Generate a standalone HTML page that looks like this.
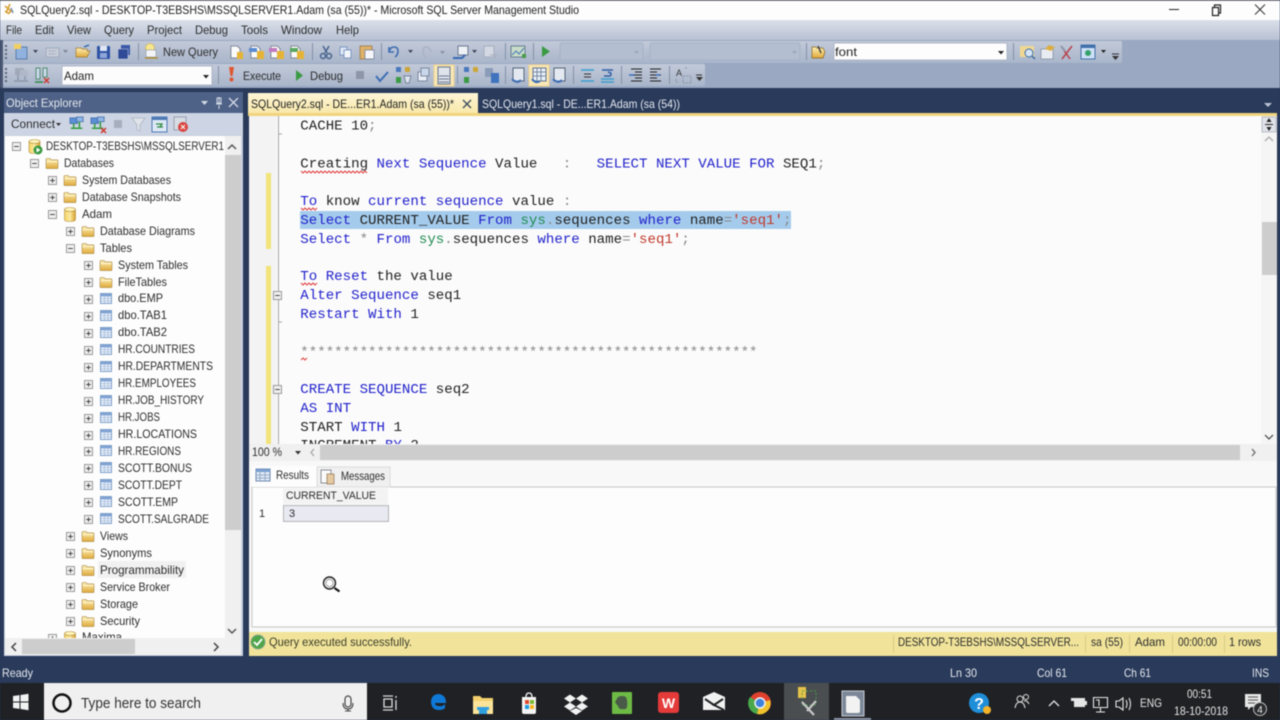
<!DOCTYPE html>
<html><head><meta charset="utf-8"><title>SSMS</title>
<style>
html,body{margin:0;padding:0;background:#293a5a;width:1280px;height:720px;overflow:hidden}
svg{display:block;filter:blur(.4px)}
text{font-family:"Liberation Sans",sans-serif;font-size:12px;fill:#2c2c2c}
.m{font-family:"Liberation Mono",monospace;font-size:14.117px;fill:#222;white-space:pre}
.b{fill:#2222cc}.g{fill:#888}.s{fill:#1f8a50}.r{fill:#c0392b}
.t{fill:#333}
.w{fill:#e6e9f0}
.sq{fill:none;stroke:#e04040;stroke-width:1}
</style></head><body>
<svg width="1280" height="720" viewBox="0 0 1280 720" xmlns="http://www.w3.org/2000/svg">
<defs>
<linearGradient id="mb" x1="0" y1="0" x2="0" y2="1"><stop offset="0" stop-color="#dbe0ea"/><stop offset="1" stop-color="#b7c1d3"/></linearGradient>
<linearGradient id="fo" x1="0" y1="0" x2="0" y2="1"><stop offset="0" stop-color="#fdf0b5"/><stop offset="1" stop-color="#e0a93a"/></linearGradient>
<linearGradient id="cy" x1="0" y1="0" x2="1" y2="0"><stop offset="0" stop-color="#f6d565"/><stop offset=".5" stop-color="#fbe9a0"/><stop offset="1" stop-color="#d9a02c"/></linearGradient>
<linearGradient id="tb" x1="0" y1="0" x2="0" y2="1"><stop offset="0" stop-color="#c2cad9"/><stop offset="1" stop-color="#a9b5ca"/></linearGradient>
<linearGradient id="at" x1="0" y1="0" x2="0" y2="1"><stop offset="0" stop-color="#fdf5d6"/><stop offset="1" stop-color="#f8e7a6"/></linearGradient>
<symbol id="folder" viewBox="0 0 14 12"><path d="M.5 2.5V1.4Q.5.6 1.4.6H5l1 1.4h6.6q.9 0 .9.9v8q0 .6-.7.6H1.2q-.7 0-.7-.6z" fill="url(#fo)" stroke="#a98a4a" stroke-width=".7"/><path d="M1 4h12" stroke="#fff8d8" stroke-width="1"/></symbol>
<symbol id="table" viewBox="0 0 12 11"><rect x=".5" y=".5" width="11" height="10" fill="#e9f0fa" stroke="#7f9fc9"/><rect x="1" y="1" width="10" height="2.4" fill="#7fa3d4"/><path d="M1 5.5h10M1 8h10M4.5 3.4V10M8 3.4V10" stroke="#a8bedc" stroke-width=".8"/></symbol>
<symbol id="plus" viewBox="0 0 9 9"><rect x=".5" y=".5" width="8" height="8" fill="#f0f0f0" stroke="#9a9a9a"/><path d="M2.2 4.5h4.6M4.5 2.2v4.6" stroke="#444"/></symbol>
<symbol id="minus" viewBox="0 0 9 9"><rect x=".5" y=".5" width="8" height="8" fill="#f0f0f0" stroke="#9a9a9a"/><path d="M2.2 4.5h4.6" stroke="#444"/></symbol>
<symbol id="cyl" viewBox="0 0 12 15"><path d="M.5 2.5v10q0 2 5.5 2t5.5-2v-10" fill="url(#cy)" stroke="#b08a3a" stroke-width=".6"/><ellipse cx="6" cy="2.5" rx="5.5" ry="2" fill="#fff3b8" stroke="#b08a3a" stroke-width=".6"/></symbol>
<symbol id="page" viewBox="0 0 12 14"><path d="M1 .5h7l3 3v10H1z" fill="#fafafa" stroke="#7a8090"/></symbol>
<symbol id="net" viewBox="0 0 18 18"><rect x="1" y="2" width="8" height="6" fill="#5d8fd6" stroke="#36629f" stroke-width=".7"/><rect x="8" y="1" width="7" height="5" fill="#90b6e8" stroke="#36629f" stroke-width=".7"/><path d="M5 8v4M11 6v6M2 13h12" stroke="#2f9d3f" stroke-width="1.6" fill="none"/></symbol>
</defs>

<!-- base -->
<rect width="1280" height="720" fill="#293a5a"/>
<!-- title bar -->
<rect width="1280" height="20" fill="#fdfdfd"/>
<rect width="1280" height="1" fill="#8f8f8f"/>
<path d="M5 6l6 5-3 3M10 4l-4 9M8 13l-3-2" stroke="#d8a23a" stroke-width="1.6" fill="none"/><path d="M11 8l2 5" stroke="#7a8aa8" stroke-width="1.5"/>
<text x="20" y="14" textLength="559" lengthAdjust="spacingAndGlyphs" style="fill:#222">SQLQuery2.sql - DESKTOP-T3EBSHS\MSSQLSERVER1.Adam (sa (55))* - Microsoft SQL Server Management Studio</text>
<path d="M1169 9.5h10" stroke="#222" stroke-width="1"/>
<path d="M1212.500 7.500h6v8h-6zM1214.500 7.500v-2.500h6v8h-2" fill="none" stroke="#222" stroke-width="1.200"/>
<path d="M1255 4.500l10 10M1265 4.500l-10 10" stroke="#333" stroke-width="1"/>

<!-- menu -->
<rect y="20" width="1280" height="20" fill="url(#mb)"/>
<g class="t">
<text x="6" y="34" textLength="16" lengthAdjust="spacingAndGlyphs">File</text>
<text x="35" y="34" textLength="19" lengthAdjust="spacingAndGlyphs">Edit</text>
<text x="67" y="34" textLength="24" lengthAdjust="spacingAndGlyphs">View</text>
<text x="104" y="34" textLength="30" lengthAdjust="spacingAndGlyphs">Query</text>
<text x="147" y="34" textLength="35" lengthAdjust="spacingAndGlyphs">Project</text>
<text x="195" y="34" textLength="33" lengthAdjust="spacingAndGlyphs">Debug</text>
<text x="241" y="34" textLength="27" lengthAdjust="spacingAndGlyphs">Tools</text>
<text x="281" y="34" textLength="41" lengthAdjust="spacingAndGlyphs">Window</text>
<text x="336" y="34" textLength="23" lengthAdjust="spacingAndGlyphs">Help</text>
</g>

<!-- toolbars -->
<rect y="40" width="1280" height="48" fill="#9aa8c1"/>
<rect x="0" y="40" width="3" height="48" fill="#4b5873"/>
<rect x="3" y="41" width="1119" height="22" fill="url(#tb)" rx="2"/>
<rect x="3" y="64" width="702" height="22" fill="url(#tb)" rx="2"/>
<g fill="#5a6478"><rect x="5" y="45" width="2" height="2"/><rect x="5" y="49" width="2" height="2"/><rect x="5" y="53" width="2" height="2"/><rect x="5" y="57" width="2" height="2"/><rect x="5" y="68" width="2" height="2"/><rect x="5" y="72" width="2" height="2"/><rect x="5" y="76" width="2" height="2"/><rect x="5" y="80" width="2" height="2"/></g>

<!-- toolbar 1 icons -->
<rect x="16" y="47" width="11" height="12" fill="#8fb2df" stroke="#4d6f9f" stroke-width=".8"/><rect x="14" y="44" width="7" height="5" fill="#f3cf61"/>
<path d="M33 50l5 0-2.500 3z" fill="#3c4658"/>
<rect x="46" y="48" width="13" height="9" fill="#c8ced9" stroke="#a3abbb"/><path d="M49 51h7M49 54h7" stroke="#98a1b2" stroke-dasharray="2 1"/>
<path d="M63 50l5 0-2.500 3z" fill="#7c8596"/>
<path d="M76 57V48h5l1 1h5v2h3l-3 6z" fill="url(#fo)" stroke="#a27a30" stroke-width=".7"/><path d="M84 47l5-2" stroke="#3f71b0" stroke-width="1.500"/>
<rect x="97" y="46" width="13" height="13" rx="1" fill="#2f52a5"/><rect x="100" y="46" width="7" height="5" fill="#dfe7f5"/><rect x="100" y="53" width="7" height="5" fill="#8ea6d8"/>
<rect x="121" y="45" width="9" height="10" fill="#3a59a8"/><rect x="118" y="49" width="10" height="10" fill="#2f4a96" stroke="#c9d3e8" stroke-width=".5"/>
<rect x="138" y="43" width="1" height="17" fill="#8190a8"/>
<circle cx="150" cy="48" r="4.500" fill="#f7e690" stroke="#c8a53a" stroke-width=".6"/><rect x="146" y="50" width="10" height="7" fill="#f2f4f7" stroke="#8a93a5" stroke-width=".6"/><path d="M145 58h13" stroke="#b38a1e" stroke-width="1.300"/>
<text x="163" y="56" textLength="55" lengthAdjust="spacingAndGlyphs">New Query</text>
<use href="#page" x="230" y="45" width="11" height="14"/><rect x="237" y="52" width="6" height="7" fill="#e5b437"/>
<use href="#page" x="250" y="45" width="11" height="14"/><rect x="249" y="48" width="8" height="4" fill="#5a8bd0"/><rect x="257" y="51" width="7" height="8" fill="#e5b437"/>
<use href="#page" x="270" y="45" width="11" height="14"/><rect x="269" y="48" width="8" height="4" fill="#c27ac0"/><rect x="277" y="51" width="7" height="8" fill="#e5b437"/>
<use href="#page" x="290" y="45" width="11" height="14"/><rect x="290" y="48" width="8" height="4" fill="#5aa860"/><rect x="297" y="51" width="7" height="8" fill="#e5b437"/>
<rect x="312" y="43" width="1" height="17" fill="#8190a8"/>
<path d="M323 46l4 7M329 46l-4 7" stroke="#48638f" stroke-width="1.500"/><circle cx="323" cy="56" r="2.500" fill="none" stroke="#48638f" stroke-width="1.500"/><circle cx="329" cy="56" r="2.500" fill="none" stroke="#48638f" stroke-width="1.500"/>
<rect x="340" y="47" width="7" height="8" fill="#dfe7f5" stroke="#5d7fb5" stroke-width=".7"/><rect x="344" y="50" width="7" height="8" fill="#f2f5fa" stroke="#5d7fb5" stroke-width=".7"/>
<rect x="360" y="46" width="12" height="13" fill="#dcb169" stroke="#98703a" stroke-width=".7"/><rect x="365" y="50" width="9" height="9" fill="#f5f6fa" stroke="#6a7890" stroke-width=".7"/>
<rect x="381" y="43" width="1" height="17" fill="#8190a8"/>
<path d="M389 52q1-5 5-5 4 0 4 4t-3 6M389 47v5h5" fill="none" stroke="#3e6db2" stroke-width="1.600"/>
<path d="M408 50l5 0-2.500 3z" fill="#3c4658"/>
<path d="M431 52q-1-5-5-5-3 0-3 4t3 6" fill="none" stroke="#aab3c4" stroke-width="1.500"/>
<path d="M440 51l5 0-2.500 3z" fill="#8a93a5"/>
<rect x="458" y="46" width="10" height="9" fill="#eef1f6" stroke="#6a7890"/><path d="M453 58h9l3-3" stroke="#3868b5" stroke-width="2" fill="none"/>
<path d="M472 50l5 0-2.500 3z" fill="#3c4658"/>
<rect x="484" y="46" width="10" height="11" fill="#d3d8e2" stroke="#a7afbf"/><path d="M490 55l6 0-2 3" stroke="#a7afbf" fill="none"/>
<rect x="505" y="43" width="1" height="17" fill="#8190a8"/>
<rect x="511" y="46" width="14" height="11" fill="#c8dcc8" stroke="#667f93"/><path d="M512 55l4-4 3 3 5-6" stroke="#4b7ab8" fill="none"/><rect x="522" y="54" width="4" height="4" fill="#4a9a4a"/>
<rect x="533" y="43" width="1" height="17" fill="#8190a8"/>
<path d="M542 46l8 5.500-8 5.500z" fill="#3a9a42"/>
<rect x="560" y="43" width="83" height="17" rx="2" fill="#b3bed1" stroke="#a6b2c7"/>
<path d="M634 51h5l-2.500 3z" fill="#9ba6b9"/>
<rect x="650" y="43" width="150" height="17" rx="2" fill="#b3bed1" stroke="#a6b2c7"/>
<path d="M792 51h5l-2.500 3z" fill="#9ba6b9"/>
<rect x="806" y="43" width="1" height="17" fill="#8190a8"/>
<path d="M812 58V47h4l1 1h6l2 4-2 6z" fill="url(#fo)" stroke="#8a6520" stroke-width=".7"/><path d="M818 46l3 7" stroke="#333" stroke-width="1.300"/>
<rect x="834" y="43" width="173" height="17" fill="#fdfdfd" stroke="#aeb6c6"/>
<text x="835" y="56" textLength="22" lengthAdjust="spacingAndGlyphs" style="fill:#222">font</text>
<path d="M998 51h6l-3 3.500z" fill="#222"/>
<rect x="1013" y="43" width="1" height="17" fill="#8190a8"/>
<rect x="1020" y="46" width="14" height="11" fill="#f0d893"/><circle cx="1029" cy="53" r="4" fill="#d5e5f7" stroke="#3a6ca8"/><path d="M1032 56l3 3" stroke="#3a6ca8" stroke-width="1.500"/>
<rect x="1041" y="49" width="12" height="10" fill="#e9edf3" stroke="#7d879b" stroke-width=".7"/><path d="M1045 49l4-4 6 2-4 4z" fill="#dcae42"/>
<path d="M1061 46l9 13M1072 46l-10 13" stroke="#b9414a" stroke-width="1.500"/><path d="M1061 46l4 5" stroke="#8d99ad" stroke-width="2"/>
<rect x="1081" y="45" width="14" height="14" fill="#cde0f5" stroke="#4171ad"/><rect x="1081" y="45" width="14" height="3" fill="#4171ad"/><circle cx="1088" cy="53" r="3" fill="#35a06b"/>
<path d="M1101 50h5l-2.500 3z" fill="#222"/>
<path d="M1112 54h7" stroke="#333"/><path d="M1112 56h7l-3.500 4z" fill="#333"/>

<!-- toolbar 2 icons -->
<g opacity=".55"><rect x="15" y="68" width="9" height="7" fill="#8b95a5"/><rect x="20" y="70" width="8" height="6" fill="#aab2c0"/><path d="M18 75v5M25 76v4M14 81h14" stroke="#6f7a8c" stroke-width="1.500"/></g>
<rect x="36" y="68" width="4" height="11" fill="#c9d7ec" stroke="#3a7e55" stroke-width=".8"/><rect x="43" y="68" width="4" height="9" fill="#c9d7ec" stroke="#3a7e55" stroke-width=".8"/><path d="M35 82h8" stroke="#2f8a46" stroke-width="1.500"/><path d="M44 78l5 5M49 78l-5 5" stroke="#cc3a30" stroke-width="1.500"/>
<rect x="62" y="66" width="150" height="19" fill="#fcfcfc" stroke="#aeb6c6"/>
<text x="64" y="80" textLength="30" lengthAdjust="spacingAndGlyphs" style="fill:#222">Adam</text>
<path d="M203 75h6l-3 3.500z" fill="#222"/>
<rect x="218" y="66" width="1" height="18" fill="#8190a8"/>
<path d="M229 67h5l-1.500 9h-2z" fill="#e0562f"/><circle cx="231.500" cy="79.500" r="2" fill="#e0562f"/>
<text x="243" y="80" textLength="38" lengthAdjust="spacingAndGlyphs">Execute</text>
<path d="M296 70l7 5.500-7 5.500z" fill="#3a9a42"/>
<text x="310" y="80" textLength="33" lengthAdjust="spacingAndGlyphs">Debug</text>
<rect x="356" y="71" width="8" height="8" fill="#8d96a8"/>
<path d="M376 76l4 5 8-9" fill="none" stroke="#3d6fb5" stroke-width="2"/>
<rect x="396" y="67" width="5" height="5" fill="#4a78bd"/><rect x="405" y="67" width="5" height="5" fill="#cda63a"/><rect x="396" y="77" width="5" height="6" fill="#3c9a45"/><path d="M404 76h7l-2 7h-3z" fill="#dfe5ef" stroke="#5c6a80" stroke-width=".7"/>
<rect x="418" y="72" width="9" height="9" fill="#e8ecf3" stroke="#7a88a0"/><rect x="421" y="68" width="8" height="8" fill="#cad7ea" stroke="#7a88a0"/>
<rect x="434" y="65" width="20" height="21" fill="#f8e8b8" stroke="#eed28c"/><rect x="438" y="67" width="12" height="17" fill="#dee3ec" stroke="#667389"/><path d="M439 76h10M439 79h10M439 82h10" stroke="#6d7a8f"/>
<rect x="457" y="66" width="1" height="18" fill="#8190a8"/>
<rect x="464" y="67" width="5" height="5" fill="#4a78bd"/><rect x="473" y="67" width="5" height="5" fill="#cda63a"/><rect x="464" y="77" width="5" height="6" fill="#3c9a45"/>
<rect x="485" y="68" width="8" height="9" fill="#8a9cb8"/><rect x="491" y="73" width="8" height="10" fill="#3f73bd"/>
<rect x="505" y="66" width="1" height="18" fill="#8190a8"/>
<rect x="513" y="68" width="11" height="13" fill="#e4e9f1" stroke="#536178"/><path d="M512 79q5 5 9 1" stroke="#3d6fb5" stroke-width="2" fill="none"/>
<rect x="529" y="65" width="20" height="21" fill="#f8e8b8" stroke="#eed28c"/><rect x="533" y="68" width="13" height="13" fill="#e8f0f8" stroke="#637089"/><path d="M533 72h13M533 76h13M537 68v13M541 68v13" stroke="#7888a3"/><path d="M532 79q4 5 8 2" stroke="#3d6fb5" stroke-width="2" fill="none"/>
<rect x="554" y="68" width="11" height="13" fill="#e4e9f1" stroke="#536178"/><path d="M553 79q5 5 9 1" stroke="#3d6fb5" stroke-width="2" fill="none"/>
<rect x="573" y="66" width="1" height="18" fill="#8190a8"/>
<path d="M581 70h13" stroke="#3a9ed0" stroke-width="1.500"/><path d="M584 74h7M584 77h7" stroke="#333"/><path d="M581 81h13" stroke="#3a9ed0" stroke-width="1.500"/>
<path d="M602 70h11" stroke="#2f5fa8" stroke-width="1.500"/><path d="M608 72q5 1 2 4h-6" stroke="#2f5fa8" stroke-width="1.500" fill="none"/><path d="M601 79h13M601 82h13" stroke="#3a9ed0" stroke-width="1.500"/>
<rect x="621" y="66" width="1" height="18" fill="#8190a8"/>
<path d="M631 69h11M635 72h7M631 75h11M635 78h7M631 81h11" stroke="#222"/><path d="M629 75h5" stroke="#3a6fc0" stroke-width="1.500"/>
<path d="M650 69h11M650 72h7M650 75h11M650 78h7M650 81h11" stroke="#222"/><path d="M660 75h-4" stroke="#3a6fc0" stroke-width="1.500"/>
<rect x="669" y="66" width="1" height="18" fill="#8190a8"/>
<text x="676" y="76" style="font-size:9px;fill:#333">A</text>
<path d="M685 68l3 0M676 79v3h3M683 76h8v7h-8z" stroke="#7f8a9d" fill="none" stroke-width=".8" stroke-dasharray="2 1"/>
<path d="M696 75h6" stroke="#333"/><path d="M696 77h7l-3.500 4z" fill="#333"/>

<!-- Tab strip -->
<rect x="0" y="88" width="1280" height="28" fill="#293a5a"/>
<rect x="248" y="93" width="230" height="22" fill="url(#at)"/>
<text x="251" y="108" textLength="203" lengthAdjust="spacingAndGlyphs" style="fill:#222">SQLQuery2.sql - DE...ER1.Adam (sa (55))*</text>
<path d="M463 100l8 8M471 100l-8 8" stroke="#3a4a5e" stroke-width="1.300"/>
<text x="482" y="108" textLength="198" lengthAdjust="spacingAndGlyphs" class="w">SQLQuery1.sql - DE...ER1.Adam (sa (54))</text>
<path d="M1264 103h8l-4 4z" fill="#b9c3d4"/>
<rect x="248" y="113" width="1029" height="3" fill="#f1d47e"/>

<!-- Object Explorer -->
<rect x="4" y="92" width="239" height="21" fill="#4e6186"/>
<text x="6" y="107" textLength="76" lengthAdjust="spacingAndGlyphs" class="w">Object Explorer</text>
<path d="M201 101h7l-3.500 4z" fill="#d3d9e5"/>
<path d="M219 97v7m-3 0h6M217 98h4v5h-4zM219 105v4" stroke="#d3d9e5" fill="none"/>
<path d="M229 98l9 9M238 98l-9 9" stroke="#d3d9e5" stroke-width="1.300"/>
<rect x="4" y="113" width="239" height="22" fill="#cdd4e3"/>
<text x="11" y="128" textLength="44" lengthAdjust="spacingAndGlyphs">Connect</text>
<path d="M56 123h5l-2.500 3z" fill="#333"/>
<use href="#net" x="69" y="116" width="17" height="17"/>
<use href="#net" x="90" y="116" width="17" height="17"/>
<path d="M101 128l5 5M106 128l-5 5" stroke="#d03a30" stroke-width="1.500"/>
<rect x="114" y="120" width="8" height="8" fill="#a7afbd"/>
<path d="M132 118h13l-5 7v6l-3-1v-5z" fill="#dfe3ea" stroke="#aeb5c2" stroke-width=".8"/>
<rect x="152" y="117" width="15" height="15" fill="#dce8f6" stroke="#4d7ab5"/><rect x="152" y="117" width="15" height="3" fill="#4d7ab5"/><path d="M156 124h6l-2 3M163 127h-6" stroke="#2f8a3c" stroke-width="1.300" fill="none"/>
<rect x="174" y="117" width="12" height="13" fill="#d7dbe3" stroke="#97a0af"/><circle cx="183" cy="127" r="5" fill="#d9453f"/><path d="M181 125l4 4M185 125l-4 4" stroke="#fff"/>

<!-- tree -->
<rect x="4" y="135" width="239" height="521" fill="#c9d1e0"/>
<rect x="5" y="136" width="236" height="519" fill="#fdfdfd"/>
<rect x="225" y="136" width="16" height="502" fill="#f0f0f0"/>
<rect x="225" y="155" width="16" height="375" fill="#cdcdcd"/>
<path d="M228 149l4-4 4 4" stroke="#555" stroke-width="1.500" fill="none"/>
<path d="M228 633l4-0 0 0" stroke="none" fill="none"/>
<path d="M228 629l4 4 4-4" stroke="#555" stroke-width="1.500" fill="none"/>

<use href="#minus" x="12" y="142" width="9" height="9"/>
<use href="#cyl" x="28" y="139" width="13" height="15"/><circle cx="38" cy="150" r="4.500" fill="#3a9a42"/><path d="M36.500 147.500l4 2.500-4 2.500z" fill="#fff"/>
<text x="46" y="150" textLength="178" lengthAdjust="spacingAndGlyphs">DESKTOP-T3EBSHS\MSSQLSERVER1</text>
<use href="#minus" x="30" y="159" width="9" height="9"/><use href="#folder" x="45" y="158" width="14" height="11"/>
<text x="64" y="167" textLength="50" lengthAdjust="spacingAndGlyphs">Databases</text>
<use href="#plus" x="48" y="176" width="9" height="9"/><use href="#folder" x="63" y="175" width="14" height="11"/>
<text x="82" y="184" textLength="89" lengthAdjust="spacingAndGlyphs">System Databases</text>
<use href="#plus" x="48" y="193" width="9" height="9"/><use href="#folder" x="63" y="192" width="14" height="11"/>
<text x="82" y="201" textLength="99" lengthAdjust="spacingAndGlyphs">Database Snapshots</text>
<use href="#minus" x="48" y="210" width="9" height="9"/><use href="#cyl" x="64" y="207" width="12" height="15"/>
<text x="82" y="218" textLength="30" lengthAdjust="spacingAndGlyphs">Adam</text>
<use href="#plus" x="66" y="227" width="9" height="9"/><use href="#folder" x="81" y="226" width="14" height="11"/>
<text x="100" y="235" textLength="95" lengthAdjust="spacingAndGlyphs">Database Diagrams</text>
<use href="#minus" x="66" y="244" width="9" height="9"/><use href="#folder" x="81" y="243" width="14" height="11"/>
<text x="100" y="252" textLength="32" lengthAdjust="spacingAndGlyphs">Tables</text>
<use href="#plus" x="84" y="261" width="9" height="9"/><use href="#folder" x="99" y="260" width="14" height="11"/>
<text x="118" y="269" textLength="70" lengthAdjust="spacingAndGlyphs">System Tables</text>
<use href="#plus" x="84" y="278" width="9" height="9"/><use href="#folder" x="99" y="277" width="14" height="11"/>
<text x="118" y="286" textLength="49" lengthAdjust="spacingAndGlyphs">FileTables</text>

<use href="#plus" x="84" y="295" width="9" height="9"/><use href="#table" x="100" y="293" width="12" height="11"/><text x="118" y="302" textLength="45" lengthAdjust="spacingAndGlyphs">dbo.EMP</text>
<use href="#plus" x="84" y="312" width="9" height="9"/><use href="#table" x="100" y="310" width="12" height="11"/><text x="118" y="319" textLength="49" lengthAdjust="spacingAndGlyphs">dbo.TAB1</text>
<use href="#plus" x="84" y="329" width="9" height="9"/><use href="#table" x="100" y="327" width="12" height="11"/><text x="118" y="336" textLength="49" lengthAdjust="spacingAndGlyphs">dbo.TAB2</text>
<use href="#plus" x="84" y="346" width="9" height="9"/><use href="#table" x="100" y="344" width="12" height="11"/><text x="118" y="353" textLength="77" lengthAdjust="spacingAndGlyphs">HR.COUNTRIES</text>
<use href="#plus" x="84" y="363" width="9" height="9"/><use href="#table" x="100" y="361" width="12" height="11"/><text x="118" y="370" textLength="95" lengthAdjust="spacingAndGlyphs">HR.DEPARTMENTS</text>
<use href="#plus" x="84" y="380" width="9" height="9"/><use href="#table" x="100" y="378" width="12" height="11"/><text x="118" y="387" textLength="78" lengthAdjust="spacingAndGlyphs">HR.EMPLOYEES</text>
<use href="#plus" x="84" y="397" width="9" height="9"/><use href="#table" x="100" y="395" width="12" height="11"/><text x="118" y="404" textLength="86" lengthAdjust="spacingAndGlyphs">HR.JOB_HISTORY</text>
<use href="#plus" x="84" y="414" width="9" height="9"/><use href="#table" x="100" y="412" width="12" height="11"/><text x="118" y="421" textLength="42" lengthAdjust="spacingAndGlyphs">HR.JOBS</text>
<use href="#plus" x="84" y="431" width="9" height="9"/><use href="#table" x="100" y="429" width="12" height="11"/><text x="118" y="438" textLength="79" lengthAdjust="spacingAndGlyphs">HR.LOCATIONS</text>
<use href="#plus" x="84" y="447" width="9" height="9"/><use href="#table" x="100" y="445" width="12" height="11"/><text x="118" y="455" textLength="63" lengthAdjust="spacingAndGlyphs">HR.REGIONS</text>
<use href="#plus" x="84" y="464" width="9" height="9"/><use href="#table" x="100" y="462" width="12" height="11"/><text x="118" y="472" textLength="74" lengthAdjust="spacingAndGlyphs">SCOTT.BONUS</text>
<use href="#plus" x="84" y="481" width="9" height="9"/><use href="#table" x="100" y="479" width="12" height="11"/><text x="118" y="489" textLength="64" lengthAdjust="spacingAndGlyphs">SCOTT.DEPT</text>
<use href="#plus" x="84" y="498" width="9" height="9"/><use href="#table" x="100" y="496" width="12" height="11"/><text x="118" y="506" textLength="60" lengthAdjust="spacingAndGlyphs">SCOTT.EMP</text>
<use href="#plus" x="84" y="515" width="9" height="9"/><use href="#table" x="100" y="513" width="12" height="11"/><text x="118" y="523" textLength="91" lengthAdjust="spacingAndGlyphs">SCOTT.SALGRADE</text>

<use href="#plus" x="66" y="532" width="9" height="9"/><use href="#folder" x="81" y="531" width="14" height="11"/><text x="100" y="540" textLength="28" lengthAdjust="spacingAndGlyphs">Views</text>
<use href="#plus" x="66" y="549" width="9" height="9"/><use href="#folder" x="81" y="548" width="14" height="11"/><text x="100" y="557" textLength="52" lengthAdjust="spacingAndGlyphs">Synonyms</text>
<rect x="98" y="561" width="88" height="17" fill="#f1f1f1"/>
<use href="#plus" x="66" y="566" width="9" height="9"/><use href="#folder" x="81" y="565" width="14" height="11"/><text x="100" y="574" textLength="84" lengthAdjust="spacingAndGlyphs">Programmability</text>
<use href="#plus" x="66" y="583" width="9" height="9"/><use href="#folder" x="81" y="582" width="14" height="11"/><text x="100" y="591" textLength="70" lengthAdjust="spacingAndGlyphs">Service Broker</text>
<use href="#plus" x="66" y="600" width="9" height="9"/><use href="#folder" x="81" y="599" width="14" height="11"/><text x="100" y="608" textLength="38" lengthAdjust="spacingAndGlyphs">Storage</text>
<use href="#plus" x="66" y="617" width="9" height="9"/><use href="#folder" x="81" y="616" width="14" height="11"/><text x="100" y="625" textLength="40" lengthAdjust="spacingAndGlyphs">Security</text>
<use href="#plus" x="48" y="634" width="9" height="9"/><use href="#cyl" x="64" y="631" width="12" height="15"/>
<text x="82" y="641" textLength="40" lengthAdjust="spacingAndGlyphs">Maxima</text>
<rect x="5" y="638" width="236" height="17" fill="#f0f0f0"/>
<rect x="22" y="639" width="113" height="15" fill="#cdcdcd"/>
<path d="M16 643l-4 4 4 4M214 643l4 4-4 4" stroke="#444" stroke-width="1.500" fill="none"/>

<!-- Editor -->
<rect x="249" y="116" width="1028" height="328" fill="#fbfbfb"/>
<rect x="249" y="116" width="28" height="328" fill="#f3f3f3"/>
<rect x="278" y="116" width="1" height="328" fill="#a5a5a5"/>
<rect x="266" y="173" width="5" height="76" fill="#f2e37a"/>
<rect x="266" y="266" width="5" height="178" fill="#f2e37a"/>
<path d="M279 134h3M279 322h3" stroke="#a5a5a5"/>
<use href="#minus" x="273" y="291" width="9" height="9"/>
<use href="#minus" x="273" y="385" width="9" height="9"/>

<rect x="300" y="211" width="491" height="18" fill="#a4cbec"/>
<g xml:space="preserve">
<text class="m" x="300.300" y="129.500"><tspan>CACHE 10</tspan><tspan class="g">;</tspan></text>
<text class="m" x="300.300" y="167.500"><tspan>Creating </tspan><tspan class="b">Next Sequence </tspan><tspan>Value   </tspan><tspan class="g">:   </tspan><tspan class="b">SELECT NEXT VALUE FOR </tspan><tspan>SEQ1</tspan><tspan class="g">;</tspan></text>
<text class="m" x="300.300" y="205"><tspan class="b">To </tspan><tspan>know </tspan><tspan class="b">current sequence </tspan><tspan>value </tspan><tspan class="g">:</tspan></text>
<text class="m" x="300.300" y="224"><tspan class="b">Select </tspan><tspan>CURRENT_VALUE </tspan><tspan class="b">From </tspan><tspan class="s">sys</tspan><tspan class="g">.</tspan><tspan>sequences </tspan><tspan class="b">where </tspan><tspan>name</tspan><tspan class="g">=</tspan><tspan class="r">'seq1'</tspan><tspan class="g">;</tspan></text>
<text class="m" x="300.300" y="243"><tspan class="b">Select </tspan><tspan class="g">* </tspan><tspan class="b">From </tspan><tspan class="s">sys</tspan><tspan class="g">.</tspan><tspan>sequences </tspan><tspan class="b">where </tspan><tspan>name</tspan><tspan class="g">=</tspan><tspan class="r">'seq1'</tspan><tspan class="g">;</tspan></text>
<text class="m" x="300.300" y="280"><tspan class="b">To Reset </tspan><tspan>the value</tspan></text>
<text class="m" x="300.300" y="299"><tspan class="b">Alter Sequence </tspan><tspan>seq1</tspan></text>
<text class="m" x="300.300" y="318"><tspan class="b">Restart With </tspan><tspan>1</tspan></text>
<text class="m g" x="300.300" y="356">******************************************************</text>
<text class="m" x="300.300" y="393"><tspan class="b">CREATE SEQUENCE </tspan><tspan>seq2</tspan></text>
<text class="m" x="300.300" y="412"><tspan class="b">AS INT</tspan></text>
<text class="m" x="300.300" y="431"><tspan>START </tspan><tspan class="b">WITH </tspan><tspan>1</tspan></text>
<text class="m" x="300.300" y="449"><tspan>INCREMENT </tspan><tspan class="b">BY </tspan><tspan>2</tspan></text>
</g>
<path class="sq" d="M301 171l2 2 2-2 2 2 2-2 2 2 2-2 2 2 2-2 2 2 2-2 2 2 2-2 2 2 2-2 2 2 2-2 2 2 2-2 2 2 2-2 2 2 2-2 2 2 2-2 2 2 2-2 2 2 2-2 2 2 2-2 2 2 2-2 2 2"/>
<path class="sq" d="M301 208l2 2 2-2 2 2 2-2 2 2 2-2 2 2 2-2"/>
<path class="sq" d="M301 283l2 2 2-2 2 2 2-2 2 2 2-2 2 2 2-2"/>
<path class="sq" d="M301 360l2-2 2 2 2-2"/>
<rect x="249" y="444" width="1028" height="17" fill="#f0f0f0"/>
<text x="252" y="456" textLength="30" lengthAdjust="spacingAndGlyphs">100 %</text>
<path d="M295 451h6l-3 3.500z" fill="#333"/>
<path d="M314 449l-3 3.500 3 3.500" stroke="#a5a5a5" fill="none" stroke-width="1.300"/>
<rect x="320" y="445" width="920" height="15" fill="#cdcdcd"/>
<path d="M1252 449l3 3.500-3 3.500" stroke="#666" fill="none" stroke-width="1.300"/>
<!-- V scrollbar -->
<rect x="1261" y="116" width="16" height="328" fill="#f5f5f5"/>
<rect x="1262" y="222" width="15" height="53" fill="#cdcdcd"/>
<rect x="1262" y="117" width="14" height="15" fill="#dfe2e8" stroke="#9aa0ab" stroke-width=".6"/>
<path d="M1265 124.500h8" stroke="#222"/><path d="M1269 118l-2.500 4h5zM1269 131l-2.500-4h5z" fill="#222"/>
<path d="M1265 141l4-4 4 4" stroke="#aaa" fill="none" stroke-width="1.300"/>
<path d="M1265 435l4 4 4-4" stroke="#555" fill="none" stroke-width="1.300"/>

<!-- Results -->
<rect x="249" y="461" width="1028" height="171" fill="#f8f8f8"/>
<rect x="252" y="487" width="1024" height="140" fill="#fdfdfd" stroke="#c5c5c5"/>
<rect x="252" y="466" width="65" height="21" fill="#fdfdfd"/>
<rect x="256" y="469" width="14" height="12" fill="#e3ebf7" stroke="#6a85ad"/><rect x="256" y="469" width="14" height="3" fill="#7ba0d0"/><path d="M256 475h14M256 478h14M260 472v9M265 472v9" stroke="#95abc8"/>
<text x="276" y="479" textLength="33" lengthAdjust="spacingAndGlyphs">Results</text>
<rect x="317" y="467" width="73" height="20" fill="#f0f0f0" stroke="#dcdcdc"/>
<rect x="321" y="470" width="10" height="13" fill="#fafafa" stroke="#8a8f98"/><rect x="327" y="474" width="7" height="10" fill="#e5c9a0" stroke="#8a6f50" stroke-width=".7"/>
<text x="341" y="480" textLength="44" lengthAdjust="spacingAndGlyphs">Messages</text>
<rect x="283" y="488" width="105" height="16" fill="#f3f3f3"/>
<text x="286" y="499" textLength="90" lengthAdjust="spacingAndGlyphs" style="font-size:11px">CURRENT_VALUE</text>
<rect x="283.500" y="505.500" width="105" height="16" fill="#e9e9f2" stroke="#777" stroke-dasharray="1 1"/>
<text x="259" y="517" style="font-size:11px">1</text>
<text x="289" y="517" style="font-size:11px">3</text>

<!-- magnifier cursor -->
<circle cx="329.500" cy="583" r="6" fill="#e8e8e8" stroke="#222" stroke-width="1.400"/><circle cx="329.500" cy="583" r="3.500" fill="#fff" stroke="#aaa"/>
<path d="M334.500 588l5 3.500" stroke="#111" stroke-width="2.200"/>

<!-- Status yellow -->
<rect x="249" y="632" width="1028" height="24" fill="#f1e49a"/>
<circle cx="258" cy="642" r="7" fill="#4ea54a" stroke="#8aa88a"/><path d="M254 642l3 3 5-6" stroke="#fff" stroke-width="1.800" fill="none"/>
<text x="269" y="646" textLength="143" lengthAdjust="spacingAndGlyphs" style="fill:#3c3c2a">Query executed successfully.</text>
<text x="898" y="646" textLength="181" lengthAdjust="spacingAndGlyphs">DESKTOP-T3EBSHS\MSSQLSERVER...</text>
<rect x="893" y="635" width="1" height="18" fill="#d8ca85"/>
<rect x="1085" y="635" width="1" height="18" fill="#d8ca85"/>
<text x="1091" y="646" textLength="32" lengthAdjust="spacingAndGlyphs">sa (55)</text>
<rect x="1129" y="635" width="1" height="18" fill="#d8ca85"/>
<text x="1135" y="646" textLength="30" lengthAdjust="spacingAndGlyphs">Adam</text>
<rect x="1172" y="635" width="1" height="18" fill="#d8ca85"/>
<text x="1178" y="646" textLength="39" lengthAdjust="spacingAndGlyphs">00:00:00</text>
<rect x="1224" y="635" width="1" height="18" fill="#d8ca85"/>
<text x="1229" y="646" textLength="32" lengthAdjust="spacingAndGlyphs">1 rows</text>

<!-- Status bar -->
<text x="2" y="677" textLength="31" lengthAdjust="spacingAndGlyphs" class="w">Ready</text>
<text x="950" y="677" textLength="27" lengthAdjust="spacingAndGlyphs" class="w">Ln 30</text>
<text x="1037" y="677" textLength="30" lengthAdjust="spacingAndGlyphs" class="w">Col 61</text>
<text x="1124" y="677" textLength="27" lengthAdjust="spacingAndGlyphs" class="w">Ch 61</text>
<text x="1252" y="677" textLength="17" lengthAdjust="spacingAndGlyphs" class="w">INS</text>

<!-- Taskbar -->
<rect y="683" width="1280" height="37" fill="#1f2124"/>
<path d="M13 696l6.500-.9v6.400H13zM20.500 695l8-1.200v7.700h-8zM13 702.500h6.500v6.400L13 708zM20.500 702.500h8v7.700l-8-1.200z" fill="#f2f2f2"/>
<rect x="44" y="683" width="323" height="37" fill="#f0f0f0"/>
<circle cx="62" cy="703" r="8.500" fill="none" stroke="#111" stroke-width="2.500"/>
<text x="81" y="708" textLength="120" lengthAdjust="spacingAndGlyphs" style="font-size:14.500px;fill:#333">Type here to search</text>
<rect x="345" y="696" width="6" height="11" rx="3" fill="none" stroke="#444" stroke-width="1.200"/><path d="M343 703q0 6 5 6t5-6M348 709v2M345 711h6" fill="none" stroke="#444" stroke-width="1.100"/>
<path d="M383 696h10M383 710h10M384 699h8v8h-8zM396 696v2M396 700v10" stroke="#ddd" stroke-width="1.300" fill="none"/>
<path d="M431 703h15q0-8-7-9-7 0-8 7 0 9 8 9 4 0 6-2v-4q-3 3-6 2-4 0-4-3z" fill="#0f79d8"/>
<path d="M473 696h7l2 2h11v16h-20z" fill="#f3d06d"/><path d="M473 701h20v13h-20z" fill="#fbe39a"/><path d="M479 714v-5h8v5" fill="#2f9fe0"/><rect x="477" y="707" width="12" height="3" fill="#2f9fe0"/>
<path d="M522 697h14v15q0 2-2 2h-10q-2 0-2-2z" fill="#f4f4f4"/><path d="M526 697q0-4 3-4t3 4" fill="none" stroke="#f4f4f4" stroke-width="1.300"/><rect x="525" y="700" width="4" height="4" fill="#e04a2a"/><rect x="530" y="700" width="4" height="4" fill="#7cb82f"/><rect x="525" y="705" width="4" height="4" fill="#1e9fe3"/><rect x="530" y="705" width="4" height="4" fill="#f6b51e"/>
<path d="M570 695l6 4-6 4-6-4zM582 695l6 4-6 4-6-4zM570 703l6 4-6 4-6-4zM582 703l6 4-6 4-6-4z" fill="#f2f2f2" transform="translate(0 -.5)"/><path d="M570 711l6-3 6 3-6 4z" fill="#f2f2f2"/>
<rect x="612" y="692" width="20" height="22" rx="1" fill="#6dbb45"/><path d="M618 697q4-2 8 0 2 5 1 10-1 3-4 2-4 1-5-3-2-2-3-4z" fill="#4a5a48"/>
<rect x="658" y="692" width="21" height="21" rx="3" fill="#e53a3a"/><text x="668.500" y="708" text-anchor="middle" style="font-size:14px;font-weight:bold;fill:#fff">W</text>
<path d="M703 697l11-5 11 5v13h-22z" fill="#f2f2f2"/><path d="M705 699l9 6 9-6" stroke="#1f2124" stroke-width="2" fill="none"/><path d="M712 704l12 6" stroke="#1f2124" stroke-width="2"/>
<circle cx="760" cy="703" r="11" fill="#e0412f"/><path d="M760 703L750 697a11 11 0 0 0 7 17z" fill="#4aa84a"/><path d="M760 703l10-3a11 11 0 0 1-13 14z" fill="#f0c22b"/><circle cx="760" cy="703" r="5" fill="#3f82dc" stroke="#f3f3f3" stroke-width="1.500"/>
<rect x="784" y="683" width="45" height="37" fill="#4a4e50"/>
<rect x="798" y="687" width="8" height="11" fill="#e5c34a"/><rect x="802" y="691" width="14" height="14" fill="none" stroke="#4a9a4a" stroke-dasharray="2 2"/><path d="M802 702l12 13M816 701l-9 10" stroke="#c8c8c8" stroke-width="2.200"/>
<rect x="842" y="691" width="22" height="25" fill="#7b8798" stroke="#c8cdd6"/><path d="M846 696h10l4 4v11q0 2-2 2h-10q-2 0-2-2z" fill="#f2f2f2"/>
<rect x="834" y="718" width="37" height="2" fill="#8f98a8"/>
<circle cx="979" cy="703" r="10" fill="#1f8ed8"/><text x="979" y="709" text-anchor="middle" style="font-size:16px;font-weight:bold;fill:#fff">?</text><circle cx="987" cy="710" r="4" fill="#f3b42b"/>
<circle cx="1020" cy="699" r="3" fill="none" stroke="#ddd"/><circle cx="1026" cy="697" r="2.500" fill="none" stroke="#ddd"/><path d="M1015 708q1-6 5-6t5 6M1024 701q3-1 5 3" fill="none" stroke="#ddd" stroke-width="1.100"/>
<path d="M1049 706l5-5 5 5" fill="none" stroke="#e6e6e6" stroke-width="1.300"/>
<rect x="1074" y="698" width="11" height="9" fill="#e5e5e5"/><rect x="1071" y="698" width="3" height="3" fill="#e5e5e5"/><rect x="1085" y="701" width="2" height="4" fill="#e5e5e5"/>
<path d="M1093.500 697.500h14v10h-14zM1100.500 707.500v4M1096 712h9M1096 700h3v6" fill="none" stroke="#e6e6e6" stroke-width="1.100"/>
<path d="M1116 701h3l4-3v12l-4-3h-3zM1126 700q2 4 0 8M1129 698q3 6 0 12" fill="none" stroke="#e6e6e6" stroke-width="1.100"/>
<text x="1140" y="707" textLength="22" lengthAdjust="spacingAndGlyphs" style="fill:#e6e6e6">ENG</text>
<text x="1187" y="698" textLength="25" lengthAdjust="spacingAndGlyphs" style="fill:#e6e6e6">00:51</text>
<text x="1174" y="715" textLength="54" lengthAdjust="spacingAndGlyphs" style="fill:#e6e6e6">18-10-2018</text>
<path d="M1245 694h16v13h-10l-3 3v-3h-3z" fill="#e6e6e6"/><path d="M1248 697h10M1248 700h10M1248 703h7" stroke="#555"/>
<circle cx="1260" cy="709" r="6.500" fill="#2a2c2f" stroke="#bbb"/><text x="1260" y="713" text-anchor="middle" style="font-size:10px;fill:#eee">4</text>
</svg>
</body></html>
